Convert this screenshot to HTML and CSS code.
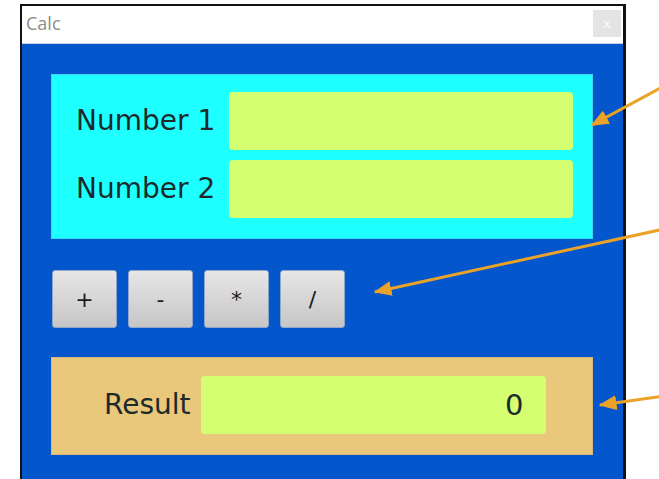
FILE: index.html
```html
<!DOCTYPE html>
<html>
<head>
<meta charset="utf-8">
<link rel="stylesheet" href="styles.css">
</head>
<body>
<div class="window">
  <div class="titlebar">
    <span class="title">Calc</span>
    <span class="close">x</span>
  </div>
  <div class="content">
    <div class="inputs">
      <label class="label">Number 1</label>
      <div class="field"></div>
      <label class="label">Number 2</label>
      <div class="field"></div>
    </div>
    <div class="buttons">
      <button class="btn">+</button>
      <button class="btn">-</button>
      <button class="btn">*</button>
      <button class="btn">/</button>
    </div>
    <div class="result">
      <span class="label">Result</span>
      <div class="field out">0</div>
    </div>
  </div>
</div>
<svg class="arrows" width="659" height="479" viewBox="0 0 659 479">
  <defs>
    <marker id="head" markerWidth="6" markerHeight="5" refX="5.5" refY="2.5" orient="auto" markerUnits="strokeWidth">
      <polygon points="0,0 6,2.5 0,5" fill="#eaa228"/>
    </marker>
  </defs>
  <line x1="664" y1="86" x2="592" y2="125" stroke="#eaa228" stroke-width="3" marker-end="url(#head)"/>
  <line x1="664" y1="229" x2="375" y2="292" stroke="#eaa228" stroke-width="3" marker-end="url(#head)"/>
  <line x1="664" y1="396" x2="600" y2="405" stroke="#eaa228" stroke-width="3" marker-end="url(#head)"/>
</svg>
</body>
</html>
```

FILE: styles.css
```css
html, body {
  margin: 0;
  padding: 0;
  background: #ffffff;
  overflow: hidden;
  width: 659px;
  height: 479px;
}
body {
  position: relative;
  font-family: "DejaVu Sans", sans-serif;
}
.window {
  margin: 4px 0 0 20px;
  width: 601px;
  border: 2px solid #111;
  border-right-width: 3px;
  border-bottom: none;
}
.titlebar {
  height: 37px;
  background: #fff;
  border-bottom: 1px solid #c9d3e6;
  display: flex;
  align-items: flex-start;
  justify-content: space-between;
}
.title {
  font-family: "Open Sans", sans-serif;
  font-size: 18px;
  color: #8c8c8c;
  margin: 2px 0 0 4px;
  line-height: 30px;
}
.close {
  width: 28px;
  height: 27px;
  margin: 4px 2px 0 0;
  background: #e4e4e4;
  color: #fbfbfb;
  font-family: "DejaVu Sans", sans-serif;
  font-size: 13px;
  display: flex;
  align-items: center;
  justify-content: center;
}
.content {
  background: #0356cc;
  padding: 30px 30px 40px 29px;
}
.inputs {
  background: #1effff;
  box-shadow: inset 0 0 0 1px #3cd6f0;
  padding: 18px 20px 21px 25px;
  display: grid;
  grid-template-columns: 153px 1fr;
  row-gap: 10px;
  align-items: center;
}
.label {
  font-size: 28px;
  color: #1c2a2c;
  line-height: 1;
}
.field {
  height: 58px;
  background: #d4ff70;
  border-radius: 4px;
  box-sizing: border-box;
}
.buttons {
  display: flex;
  gap: 11px;
  margin: 31px 0 29px 1px;
}
.btn {
  width: 65px;
  height: 58px;
  margin: 0;
  padding: 0;
  border: 1px solid #8ea6c9;
  border-radius: 3px;
  background: linear-gradient(#e6e6e6, #c6c6c6);
  font-family: "DejaVu Sans", sans-serif;
  font-size: 22px;
  color: #1a1a1a;
  display: flex;
  align-items: center;
  justify-content: center;
}
.result {
  background: #e9c77b;
  box-shadow: inset 0 0 0 1px #d8b878;
  height: 98px;
  box-sizing: border-box;
  padding: 19px 0 21px 53px;
  display: flex;
  align-items: center;
  gap: 10px;
}
.out {
  width: 345px;
  display: flex;
  align-items: center;
  justify-content: flex-end;
  padding-right: 22px;
  font-size: 29px;
  color: #1c2a2c;
}
.arrows {
  position: absolute;
  left: 0;
  top: 0;
  pointer-events: none;
}
```
